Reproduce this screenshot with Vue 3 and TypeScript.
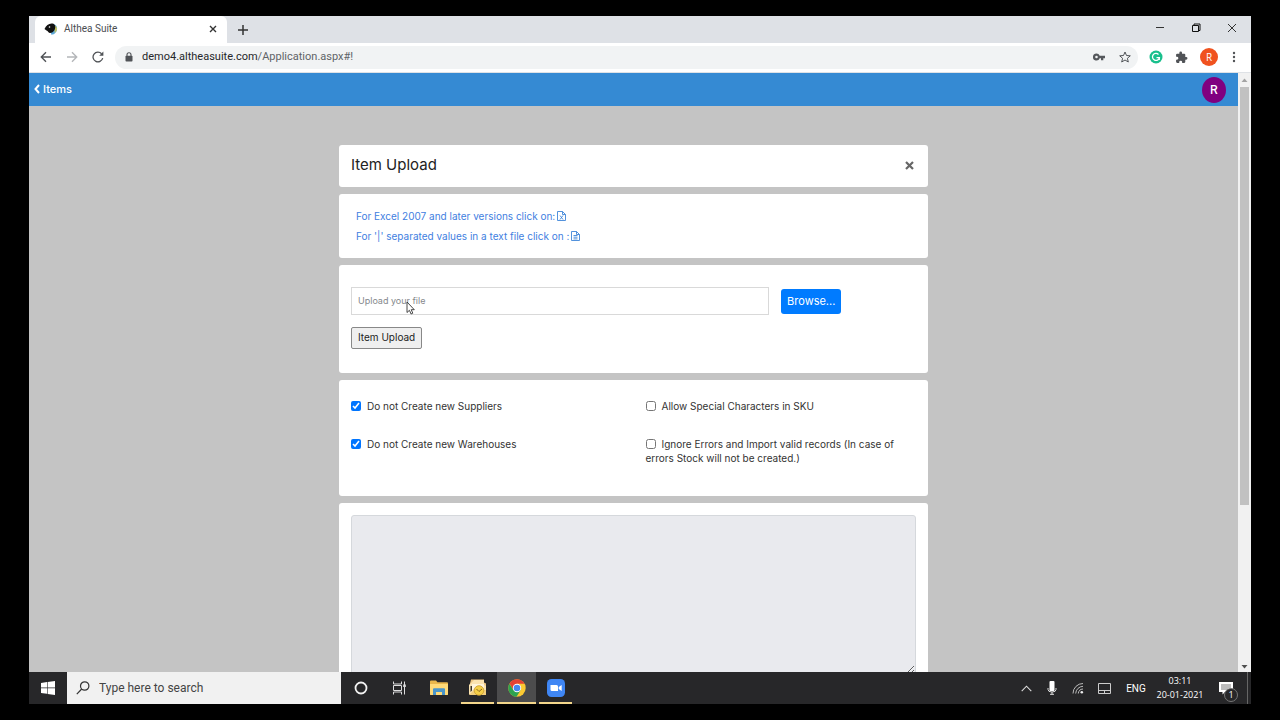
<script setup lang="ts">
import { ref } from 'vue'

interface Option {
  id: string
  label: string
  checked: boolean
}

const options = ref<Option[]>([
  { id: 'suppliers', label: 'Do not Create new Suppliers', checked: true },
  { id: 'special', label: 'Allow Special Characters in SKU', checked: false },
  { id: 'warehouses', label: 'Do not Create new Warehouses', checked: true },
  {
    id: 'ignore',
    label: 'Ignore Errors and Import valid records (In case of errors Stock will not be created.)',
    checked: false,
  },
])

const fileName = ref('')
const search = ref('')
const log = ref('')
</script>

<template>
  <div class="desktop">
    <header class="tabs">
      <div class="tab">
        <svg class="favicon" viewBox="0 0 14 14" width="14" height="14">
          <path d="M8 2c4 0 5.500 2.500 5 5.500S10 13 7 12.500z" fill="#5aa7d8" />
          <path d="M11 3.500c2 1.500 2.400 3.500 1.500 5.500l-2 2z" fill="#c9c45c" />
          <path d="M0.500 7C2 3.500 5 1 8.500 1.500c3 .5 3.500 4 2 6.500-1.200 2-2.500 3-4.500 3C4.500 11 4 9 2.500 8.500z" fill="#111" />
          <circle cx="5.500" cy="5" r="0.800" fill="#fff" />
        </svg>
        <span class="tab-title">Althea Suite</span>
        <button class="icon-btn tab-close" aria-label="Close tab">
          <svg viewBox="0 0 8 8" width="8" height="8"><path d="M1 1l6 6M7 1L1 7" stroke="#333" stroke-width="1.400" /></svg>
        </button>
      </div>
      <button class="icon-btn new-tab" aria-label="New tab">
        <svg viewBox="0 0 10 10" width="10" height="10"><path d="M5 0v10M0 5h10" stroke="#333" stroke-width="1.500" /></svg>
      </button>
      <div class="window-buttons">
        <button class="icon-btn" aria-label="Minimize">
          <svg viewBox="0 0 10 10" width="10" height="10"><path d="M1 4.500h8" stroke="#333" /></svg>
        </button>
        <button class="icon-btn" aria-label="Restore">
          <svg viewBox="0 0 10 10" width="10" height="10" fill="none" stroke="#111"><path d="M1.500 2.500h6v6h-6zM3 2.500v-1.500h6v6.500h-1.500" /></svg>
        </button>
        <button class="icon-btn" aria-label="Close">
          <svg viewBox="0 0 10 10" width="10" height="10"><path d="M1 1l8 8M9 1L1 9" stroke="#333" /></svg>
        </button>
      </div>
    </header>

    <nav class="toolbar">
      <button class="icon-btn nav-btn" aria-label="Back">
        <svg viewBox="0 0 12 12" width="12" height="12" fill="none" stroke="#4f5256" stroke-width="1.400"><path d="M11 6H1.500M6 1.300L1.300 6 6 10.700" /></svg>
      </button>
      <button class="icon-btn nav-btn" aria-label="Forward">
        <svg viewBox="0 0 12 12" width="12" height="12" fill="none" stroke="#b4b6b9" stroke-width="1.400"><path d="M1 6h9.500M6 1.300L10.700 6 6 10.700" /></svg>
      </button>
      <button class="icon-btn nav-btn" aria-label="Reload">
        <svg viewBox="0 0 12 12" width="12" height="12"><path d="M10.700 7.200A4.900 4.900 0 1 1 9.600 2.700" fill="none" stroke="#4f5256" stroke-width="1.300" /><path d="M11.400 0.600v4.200H7.200z" fill="#4f5256" /></svg>
      </button>
      <div class="omnibox">
        <svg viewBox="0 0 8 10" width="8" height="10"><path d="M2 4V2.700a2 2 0 0 1 4 0V4" fill="none" stroke="#505357" stroke-width="1.100" /><rect x="0.500" y="3.800" width="7" height="5.700" rx="0.800" fill="#505357" /></svg>
        <span class="url"><span class="host">demo4.altheasuite.com</span>/Application.aspx#!</span>
        <button class="icon-btn bar-icon" aria-label="Passwords">
          <svg viewBox="0 0 12 8" width="12" height="8"><path d="M3.500 0.500a3.500 3.500 0 1 0 3.200 4.700H8v2h2.300v-2H12V2.700H6.700A3.500 3.500 0 0 0 3.500 0.500zm0 2.200a1.300 1.300 0 1 1 0 2.600 1.300 1.300 0 0 1 0-2.600z" fill="#55585c" /></svg>
        </button>
        <button class="icon-btn bar-icon" aria-label="Bookmark">
          <svg viewBox="0 0 12 12" width="12" height="12"><path d="M6 1l1.500 3.500 3.800.3-2.900 2.500.9 3.700L6 9l-3.300 2 .9-3.700L.7 4.800l3.800-.3z" fill="none" stroke="#505357" /></svg>
        </button>
      </div>
      <div class="extensions">
        <button class="icon-btn" aria-label="Grammarly">
          <svg viewBox="0 0 14 14" width="14" height="14"><circle cx="7" cy="7" r="6.500" fill="#19bf8c" /><path d="M9.500 4.500a3.500 3.500 0 1 0 .9 3.200H7.500M10.300 7.700v2.300" fill="none" stroke="#fff" stroke-width="1.300" /></svg>
        </button>
        <button class="icon-btn" aria-label="Extensions">
          <svg viewBox="0 0 24 24" width="13" height="13" fill="#505357"><path d="M20.500 11H19V7a2 2 0 0 0-2-2h-4V3.500a2.500 2.500 0 0 0-5 0V5H4a2 2 0 0 0-2 2v3.800h1.500a2.700 2.700 0 0 1 0 5.400H2V20a2 2 0 0 0 2 2h3.800v-1.500a2.700 2.700 0 0 1 5.400 0V22H17a2 2 0 0 0 2-2v-4h1.500a2.500 2.500 0 0 0 0-5z" /></svg>
        </button>
        <button class="profile" aria-label="Profile">R</button>
        <button class="icon-btn menu" aria-label="Menu">
          <svg viewBox="0 0 4 12" width="4" height="12" fill="#505357"><circle cx="2" cy="2" r="1.200" /><circle cx="2" cy="6" r="1.200" /><circle cx="2" cy="10" r="1.200" /></svg>
        </button>
      </div>
    </nav>

    <div class="viewport">
      <div class="page">
        <div class="appbar">
          <a class="back" href="#!">
            <svg viewBox="0 0 6 10" width="6" height="10"><path d="M5 1L1.500 5 5 9" fill="none" stroke="#fff" stroke-width="2" /></svg>
            Items
          </a>
          <button class="avatar">R</button>
        </div>
        <main class="modal">
          <section class="card title-card">
            <h1>Item Upload</h1>
            <button class="icon-btn" aria-label="Close dialog">
              <svg viewBox="0 0 9 9" width="9" height="9"><path d="M1 1l7 7M8 1L1 8" stroke="#666" stroke-width="2.200" /></svg>
            </button>
          </section>

          <section class="card links">
            <a href="#!">For Excel 2007 and later versions click on:
              <svg viewBox="0 0 9 10" width="9" height="10" fill="none" stroke="#3f86d8"><path d="M0.500 0.500h5l3 3v6h-8zM5.500 0.500v3h3M3 4.500l3 4M6 4.500l-3 4" stroke-width="0.900" /></svg>
            </a>
            <a href="#!">For '|' separated values in a text file click on :
              <svg viewBox="0 0 9 10" width="9" height="10" fill="none" stroke="#3f86d8"><path d="M0.500 0.500h5l3 3v6h-8zM5.500 0.500v3h3M2.500 4.500h4M2.500 6.200h4M2.500 7.900h4" stroke-width="0.900" /></svg>
            </a>
          </section>

          <section class="card upload">
            <div class="file-row">
              <div class="file-box">
                <input v-model="fileName" type="text" placeholder="Upload your file" aria-label="Upload your file" />
                <svg class="pointer" viewBox="0 0 9 14" width="9" height="14"><path d="M1 1v10.500l2.400-2.200 1.700 3.700 1.700-.8-1.600-3.500H8.300z" fill="#fff" stroke="#333" stroke-width="0.900" /></svg>
              </div>
              <button class="browse">Browse...</button>
            </div>
            <button class="submit">Item Upload</button>
          </section>

          <section class="card options">
            <div v-for="option in options" :key="option.id" class="option">
              <input :id="option.id" v-model="option.checked" type="checkbox" />
              <label :for="option.id">{{ option.label }}</label>
            </div>
          </section>

          <section class="card result">
            <textarea v-model="log" aria-label="Upload result" readonly></textarea>
          </section>
        </main>
      </div>
      <div class="scrollbar">
        <svg viewBox="0 0 7 4" width="7" height="4"><path d="M0.500 4L3.500 0.500 6.500 4z" fill="#a3a3a3" /></svg>
        <div class="track"><div class="thumb"></div></div>
        <svg viewBox="0 0 7 4" width="7" height="4"><path d="M0.500 0L3.500 3.500 6.500 0z" fill="#505050" /></svg>
      </div>
    </div>

    <footer class="taskbar">
      <button class="icon-btn start" aria-label="Start">
        <svg viewBox="0 0 14 14" width="14" height="14" fill="#fff"><path d="M0 2l6-.9v5.500H0zM6.600 1L14 0v6.600H6.600zM0 7.200h6v5.500L0 11.900zM6.600 7.200H14V14l-7.400-1.100z" /></svg>
      </button>
      <div class="search">
        <svg viewBox="0 0 14 14" width="14" height="14" fill="none" stroke="#333" stroke-width="1.200"><circle cx="8.700" cy="5" r="4.200" /><path d="M5.700 8L0.800 13.200" /></svg>
        <input v-model="search" type="text" placeholder="Type here to search" aria-label="Type here to search" />
      </div>
      <div class="apps">
        <button class="icon-btn" aria-label="Cortana">
          <svg viewBox="0 0 14 14" width="14" height="14"><circle cx="7" cy="7" r="5.500" fill="none" stroke="#f2f2f2" stroke-width="1.800" /></svg>
        </button>
        <button class="icon-btn" aria-label="Task view">
          <svg viewBox="0 0 14 14" width="14" height="14" fill="none" stroke="#ddd"><path d="M0.500 0.500v2.500h8V.5M0.500 13.500V11h8v2.500M0.500 4.500h8v5h-8zM11.500 0.500v13" /><path d="M10.200 3.500h2.600v2.500h-2.600z" fill="#ddd" stroke="none" /></svg>
        </button>
        <button class="icon-btn" aria-label="File Explorer">
          <svg viewBox="0 0 18 16" width="18" height="16"><path d="M0 1.500Q0 .5 1 .5h5l1.500 1.700H17q1 0 1 1v11q0 .8-1 .8H1q-1 0-1-.8z" fill="#e9b74c" /><path d="M0 4h18v10.200q0 .8-1 .8H1q-1 0-1-.8z" fill="#ffda78" /><path d="M3 15V9.200q0-1 1-1h10q1 0 1 1V15h-3v-3H6v3z" fill="#4a95c9" /></svg>
        </button>
        <button class="icon-btn running" aria-label="Outlook">
          <svg viewBox="0 0 19 18" width="19" height="18"><path d="M3 .5h13v3l2 1v4H1z" fill="#f0c884" /><path d="M1 6l5-5h10v5l2 1v8.500H1z" fill="#fbe3b0" /><path d="M2.500 7h6l-6 6z" fill="#39352c" /><path d="M4 5h12v4H7l-3 3z" fill="#fff4dc" /><path d="M1 16l5-5h12v5z" fill="#f3cf7d" /><circle cx="11" cy="11.500" r="4.800" fill="#f5cf48" stroke="#c99a2c" stroke-width="0.800" /><path d="M8.500 10l2.500 2.500L14 10" fill="none" stroke="#8c661c" /></svg>
        </button>
        <button class="icon-btn running active" aria-label="Chrome">
          <svg viewBox="0 0 18 18" width="18" height="18"><circle cx="9" cy="9" r="8.700" fill="#fbc932" /><path d="M1.500 4.600A8.700 8.700 0 0 1 16.600 4.700H9L5.300 11z" fill="#e34133" /><path d="M1.400 4.700A8.700 8.700 0 0 0 8.500 17.700L12.700 11 9 13 5.300 11z" fill="#2da350" /><circle cx="9" cy="9" r="4.200" fill="#fff" /><circle cx="9" cy="9" r="3.300" fill="#4687ed" /></svg>
        </button>
        <button class="icon-btn running" aria-label="Zoom">
          <svg viewBox="0 0 18 18" width="18" height="18"><rect width="18" height="18" rx="4.500" fill="#3f86f4" /><path d="M3.500 6h6q1.500 0 1.500 1.500V12H5q-1.500 0-1.500-1.500zM11.700 8l3-2v6l-3-2z" fill="#fff" /></svg>
        </button>
      </div>
      <div class="tray">
        <button class="icon-btn" aria-label="Show hidden icons">
          <svg viewBox="0 0 11 7" width="11" height="7"><path d="M0.700 6.200L5.500 1.200l4.800 5" fill="none" stroke="#ddd" stroke-width="1.100" /></svg>
        </button>
        <button class="icon-btn" aria-label="Microphone">
          <svg viewBox="0 0 10 14" width="10" height="14"><rect x="2.500" y="0" width="5" height="10" rx="1" fill="#fff" /><path d="M1 7v1.500Q1 11 5 11t4-2.500V7M5 11v2.500M3 13.300h4" fill="none" stroke="#ddd" /></svg>
        </button>
        <button class="icon-btn" aria-label="Network">
          <svg viewBox="0 0 12 12" width="12" height="12" fill="none" stroke="#bbb"><path d="M1 11.500A10 10 0 0 1 11 1.500M3.700 11.500A7.500 7.500 0 0 1 11 4.300M6.300 11.500A5 5 0 0 1 11 7" /><circle cx="9.800" cy="10.300" r="1.300" fill="#eee" stroke="none" /></svg>
        </button>
        <button class="icon-btn" aria-label="Touchpad">
          <svg viewBox="0 0 13 11" width="13" height="11" fill="none" stroke="#ccc"><path d="M0.500 0.500h12v10H.5zM0.500 7.500h12M6.500 7.500v3" /></svg>
        </button>
        <button class="lang">ENG</button>
        <button class="clock"><span>03:11</span><span>20-01-2021</span></button>
        <button class="icon-btn notify" aria-label="Notifications">
          <svg viewBox="0 0 14 13" width="14" height="13"><path d="M0 0h14v10H6l-2.500 2.500V10H0z" fill="#fff" /><path d="M2 3h10M2 5h10M2 7h7" stroke="#555" stroke-width="0.800" /></svg>
          <span class="badge">1</span>
        </button>
        <span class="peek"></span>
      </div>
    </footer>
  </div>
</template>

<style>
body {
  background: #000;
}
</style>

<style scoped>
.desktop {
  box-sizing: border-box;
  height: 100vh;
  padding: 16px 29px;
  display: flex;
  flex-direction: column;
  background: #000;
  font-family: "Open Sans", "Noto Sans", sans-serif;
  overflow: hidden;
}
button {
  font-family: inherit;
  padding: 0;
  border: 0;
  background: none;
  color: inherit;
}
svg {
  display: block;
  flex: none;
}
.icon-btn {
  display: flex;
  align-items: center;
  justify-content: center;
}
.tabs {
  flex: none;
  height: 27px;
  display: flex;
  align-items: center;
  padding-left: 6px;
  background: #dee1e6;
}
.tab {
  box-sizing: border-box;
  height: 27px;
  width: 192px;
  padding: 0 10px 1px 9px;
  display: flex;
  align-items: center;
  gap: 6px;
  background: #fff;
  border-radius: 6px 6px 0 0;
}
.tab-title {
  flex: 1;
  font-family: Roboto, sans-serif;
  font-size: 10px;
  line-height: 14px;
  color: #4a4d51;
}
.new-tab {
  margin-left: 11px;
}
.window-buttons {
  margin-left: auto;
  padding: 0 1px 4px 0;
  display: flex;
}
.window-buttons .icon-btn {
  width: 36px;
  height: 22px;
}
.toolbar {
  flex: none;
  box-sizing: border-box;
  height: 30px;
  display: flex;
  align-items: center;
  padding: 0 0 1px 4px;
  background: #fff;
  border-bottom: 1px solid #dfe2e6;
}
.nav-btn {
  width: 26px;
  height: 24px;
}
.omnibox {
  flex: 1;
  height: 23px;
  margin-left: 4px;
  padding: 0 5px 0 10px;
  display: flex;
  align-items: center;
  gap: 9px;
  border-radius: 12px;
  background: #f1f3f4;
}
.url {
  flex: 1;
  font-family: Roboto, sans-serif;
  font-size: 11px;
  line-height: 16px;
  color: #606367;
}
.host {
  color: #25272a;
}
.bar-icon {
  width: 17px;
}
.extensions {
  display: flex;
  align-items: center;
  gap: 12px;
  padding: 0 15px 0 11px;
}
.profile {
  width: 18px;
  height: 18px;
  border-radius: 50%;
  background: #f0521f;
  color: #fff;
  font-size: 10px;
  line-height: 18px;
}
.menu {
  margin-left: 2px;
}
.viewport {
  flex: 1;
  min-height: 0;
  display: flex;
}
.page {
  flex: 1;
  min-width: 0;
  background: #c4c4c4;
  overflow: hidden;
  font-family: Inter, sans-serif;
}
.appbar {
  height: 33px;
  padding: 0 12px 0 5px;
  display: flex;
  align-items: center;
  justify-content: space-between;
  background: #358ad3;
}
.back {
  display: flex;
  align-items: center;
  gap: 3px;
  padding-bottom: 2px;
  color: #fff;
  font-size: 11px;
  line-height: 16px;
  font-weight: 500;
  text-decoration: none;
}
.avatar {
  width: 24px;
  height: 26px;
  border-radius: 50%;
  background: #800080;
  color: #fff;
  font-size: 12px;
  font-weight: 500;
}
.modal {
  max-width: 589px;
  margin: 39px auto 0;
  display: flex;
  flex-direction: column;
  gap: 7px;
}
.card {
  background: #fff;
  border-radius: 3px;
}
.title-card {
  display: flex;
  align-items: center;
  justify-content: space-between;
  padding: 8px 14px 10px 12px;
}
h1 {
  margin: 0;
  font-size: 15px;
  line-height: 24px;
  font-weight: 400;
  color: #222;
}
.links {
  display: flex;
  flex-direction: column;
  align-items: flex-start;
  padding: 12px 17px;
}
.links a {
  display: flex;
  align-items: center;
  gap: 2px;
  font-size: 10px;
  line-height: 20px;
  color: #3f80df;
  text-decoration: none;
}
.upload {
  padding: 22px 12px 24px;
}
.file-row {
  display: flex;
  align-items: center;
  gap: 12px;
}
.file-box {
  position: relative;
  flex: none;
  width: 74%;
}
.file-box input {
  box-sizing: border-box;
  display: block;
  width: 100%;
  height: 28px;
  padding: 0 6px 2px;
  border: 1px solid #d9d9d9;
  background: #fff;
  font-family: Inter, sans-serif;
  font-size: 9px;
}
.file-box input::placeholder {
  color: #85888c;
}
.pointer {
  position: absolute;
  left: 55px;
  top: 14px;
}
.browse {
  padding: 0 6px;
  border-radius: 3px;
  background: #007bff;
  color: #fff;
  font-size: 11px;
  line-height: 25px;
}
.submit {
  margin-top: 12px;
  padding: 0 6px 1px;
  border: 1px solid #888;
  border-radius: 2px;
  background: #efefef;
  color: #222;
  font-size: 10px;
  line-height: 19px;
}
.options {
  display: grid;
  grid-template-columns: 1fr 1fr;
  row-gap: 24px;
  padding: 19px 0 31px;
}
.option {
  padding: 0 12px;
  font-size: 10px;
  line-height: 14px;
  color: #333;
}
.option input {
  width: 10px;
  height: 10px;
  margin: 0 6px 0 0;
  vertical-align: -1px;
  accent-color: #0075ff;
}
.result {
  padding: 12px;
}
textarea {
  display: block;
  box-sizing: border-box;
  width: 100%;
  height: 160px;
  border: 1px solid #d5d8dc;
  border-radius: 3px;
  background: #e9eaee;
}
.scrollbar {
  flex: none;
  width: 13px;
  padding: 5px 0 3px;
  box-sizing: border-box;
  display: flex;
  flex-direction: column;
  align-items: center;
  gap: 5px;
  background: #f1f1f1;
}
.track {
  flex: 1;
  width: 9px;
}
.thumb {
  height: 73%;
  background: #c1c1c1;
}
.taskbar {
  flex: none;
  height: 32px;
  display: flex;
  background: #272729;
  color: #fff;
}
.start {
  width: 38px;
}
.search {
  box-sizing: border-box;
  width: 274px;
  padding-left: 9px;
  display: flex;
  align-items: center;
  gap: 9px;
  background: #f1f1f1;
}
.search input {
  flex: 1;
  min-width: 0;
  padding: 0;
  border: 0;
  background: none;
  font-family: Roboto, sans-serif;
  font-size: 12px;
}
.search input::placeholder {
  color: #444;
}
.apps {
  display: flex;
}
.apps .icon-btn {
  box-sizing: border-box;
  width: 39px;
  border-top: 2px solid transparent;
  border-bottom: 2px solid transparent;
}
.apps .running {
  width: 33px;
  margin: 0 3px;
  border-bottom-color: #f3d68b;
}
.apps .active {
  width: 39px;
  margin: 0;
  background: #4c4c4d;
  border-top-color: #4c4c4d;
}
.tray {
  margin-left: auto;
  display: flex;
  align-items: stretch;
}
.tray .icon-btn {
  width: 26px;
}
.lang {
  width: 38px;
  font-family: Roboto, sans-serif;
  font-size: 10px;
}
.clock {
  width: 50px;
  display: flex;
  flex-direction: column;
  align-items: center;
  justify-content: center;
  font-family: "Open Sans", sans-serif;
  font-size: 9px;
  line-height: 14px;
}
.tray .notify {
  position: relative;
  width: 42px;
}
.badge {
  position: absolute;
  left: 19px;
  top: 16px;
  width: 12px;
  height: 12px;
  border: 1px solid #777;
  border-radius: 50%;
  background: #272729;
  font-size: 9px;
  line-height: 12px;
  text-align: center;
}
.peek {
  width: 3px;
  border-left: 1px solid #666;
}
</style>
